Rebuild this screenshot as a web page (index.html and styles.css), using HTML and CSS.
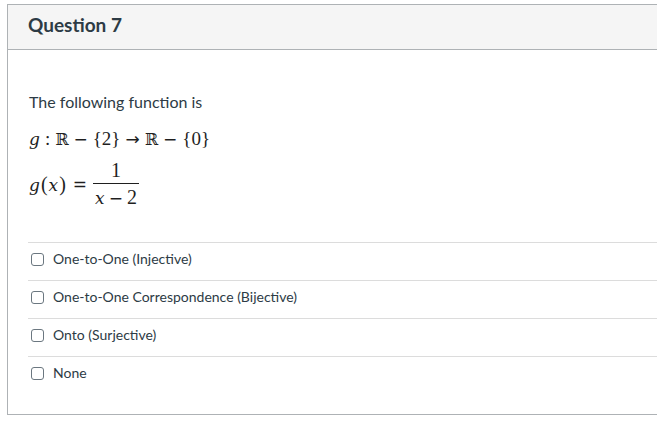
FILE: index.html
```html
<!DOCTYPE html>
<html>
<head>
<meta charset="utf-8">
<link rel="stylesheet" href="styles.css">
</head>
<body>
<div class="panel">
  <div class="header"><h2 class="title">Question 7</h2></div>
  <div class="content">
    <p class="intro">The following function is</p>
    <div class="math line1"><i>g</i><span class="op">:</span><span class="bb">ℝ</span><span class="op sym">−</span>{2}<span class="op sym">→</span><span class="bb">ℝ</span><span class="op sym">−</span>{0}</div>
    <div class="math line2">
      <span class="lhs"><i>g</i><span class="par">(</span><i>x</i><span class="par">)</span></span><span class="op eq sym">=</span>
      <span class="frac"><span class="num">1</span><span class="den"><i>x</i><span class="op sym">−</span>2</span></span>
    </div>
    <div class="answers">
      <div class="answer"><span class="box"></span><span class="label">One-to-One (Injective)</span></div>
      <div class="answer"><span class="box"></span><span class="label">One-to-One Correspondence (Bijective)</span></div>
      <div class="answer"><span class="box"></span><span class="label">Onto (Surjective)</span></div>
      <div class="answer"><span class="box"></span><span class="label">None</span></div>
    </div>
  </div>
</div>
</body>
</html>
```
FILE: styles.css
```css
html, body { margin: 0; padding: 0; background: #fff; overflow: hidden; }
body { font-family: Lato, "Noto Sans", sans-serif; color: #2d3b45; }
.panel {
  margin: 4px 0 0 7px;
  width: calc(100% - 7px);
  border: 1px solid #aeb2b5;
  border-right: none;
  height: 411px;
  box-sizing: border-box;
}
.header {
  height: 45px;
  background: #f5f5f5;
  border-bottom: 1px solid #aeb2b5;
  box-sizing: border-box;
  display: flex;
  align-items: flex-start;
  padding: 8px 0 0 20px;
}
.title { margin: 0; font-size: 19px; line-height: 24px; font-weight: 700; color: #2d3b45; }
.content { padding: 0 0 0 20px; }
.intro { margin: 42px 0 0 1px; font-size: 16px; line-height: 20px; }
.math { font-family: "Liberation Serif", "DejaVu Serif", serif; font-size: 19px; color: #1f1f1f; }
.math i { font-family: "DejaVu Serif", "Liberation Serif", serif; font-style: italic; font-size: 17px; }
.bb { font-family: "DejaVu Serif", "DejaVu Sans", serif; font-size: 16px; }
.op { margin: 0 5px; }
.sym { font-family: "DejaVu Sans", "DejaVu Serif", sans-serif; font-size: 17px; }
.line1 { margin-top: 16px; height: 24px; padding-left: 1px; display: flex; align-items: baseline; }
.line1 .op { margin: 0 5px; }
.line2 { margin-top: 8px; display: flex; align-items: center; padding-left: 1px; font-size: 20px; }
.par { margin: 0 1px; }
.eq { margin: 0 5px 0 6px; }
.frac { display: inline-flex; flex-direction: column; align-items: center; margin-left: 1px; }
.num { padding: 0 3px 3px; line-height: 20px; }
.den { border-top: 1px solid #1f1f1f; padding: 3px 2px 0; line-height: 20px; display: flex; align-items: baseline; }
.den .op { margin: 0 4px; }
.answers { margin-top: 34px; }
.answer {
  height: 38px;
  border-top: 1px solid #dcdcdc;
  box-sizing: border-box;
  display: flex;
  align-items: flex-start;
  padding: 8px 0 0 3px;
}
.box {
  width: 13px; height: 13px;
  margin-top: 2px;
  border: 1px solid #6b7780;
  border-radius: 3px;
  box-sizing: border-box;
  margin-right: 9px;
}
.label { font-size: 14px; line-height: 16px; }
```
